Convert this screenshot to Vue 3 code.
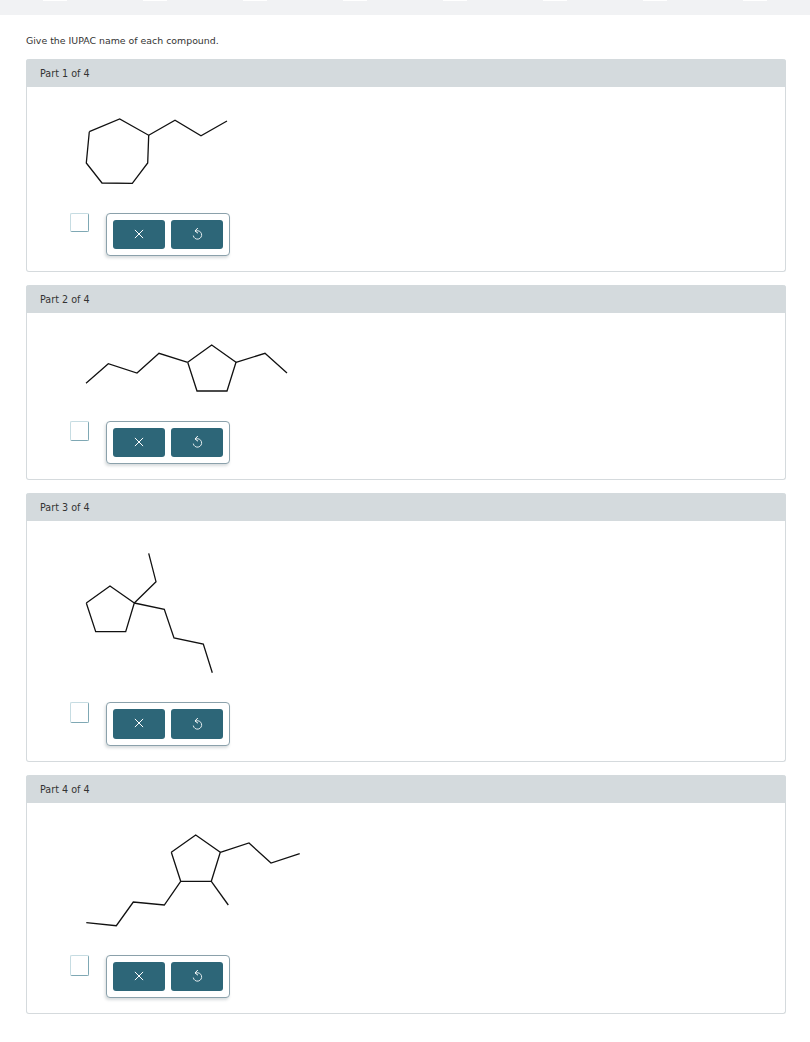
<script setup>
const parts = [
  {
    n: 1, top: 87, h: 126,
    lines: [
      '89.3,131.7 119.7,119 148.7,135.3 147.7,163 132.3,183.3 102,183 86.3,163 89.3,131.7',
      '148.7,135.3 175,120.3 201,135.7 227,121',
    ],
  },
  {
    n: 2, top: 313, h: 108,
    lines: [
      '187.7,362.3 211.7,345 236,362.3 227,391 197,391 187.7,362.3',
      '86,383.3 108.3,363.7 137,373 159,353.3 187.7,362.3',
      '236,362.3 265,353.3 287,373',
    ],
  },
  {
    n: 3, top: 521, h: 181,
    lines: [
      '86.3,603 110,586 134.3,603 125.7,631.7 95.7,631.7 86.3,603',
      '134.3,603 156,581.7 148.7,553.3',
      '134.3,603 164.3,609.3 174,638 203.3,644 212.3,672.7',
    ],
  },
  {
    n: 4, top: 803, h: 152,
    lines: [
      '171.3,852.3 195.7,835 220.3,852.3 211.3,881.3 180.7,881.3 171.3,852.3',
      '220.3,852.3 249,843 271,863 299.7,853.7',
      '211.3,881.3 228.3,905',
      '180.7,881.3 164.3,905 133.3,902 116.3,925.7 86.3,922.7',
    ],
  },
]
const tabs = 8
</script>

<template>
  <div class="page">
    <div class="topbar">
      <span v-for="t in tabs" :key="t" class="tab"></span>
    </div>
    <p class="prompt">Give the IUPAC name of each compound.</p>
    <section v-for="p in parts" :key="p.n" class="card" :class="`part-${p.n}`">
      <header class="card-head">Part {{ p.n }} of 4</header>
      <svg
        class="molecule"
        width="300"
        :height="p.h"
        :viewBox="`27 ${p.top} 300 ${p.h}`"
      >
        <polyline
          v-for="(l, i) in p.lines"
          :key="i"
          :points="l"
          fill="none"
          stroke="#111"
          stroke-width="1.3"
          stroke-linejoin="miter"
        />
      </svg>
      <div class="answer">
        <span class="check"></span>
        <div class="tools">
          <button class="btn" type="button" aria-label="Clear">
            <svg class="glyph" width="10" height="10" viewBox="0 0 10 10">
              <path d="M0.9 0.9 L9.1 9.1 M9.1 0.9 L0.9 9.1" stroke="#fff" stroke-width="1" fill="none" />
            </svg>
          </button>
          <button class="btn" type="button" aria-label="Undo">
            <svg class="glyph" width="11" height="13" viewBox="0 0 11 13">
              <path d="M4 4 A4.2 4.2 0 1 1 1.3 8.6" stroke="#e6eef0" stroke-width="1" fill="none" />
              <path d="M5.8 1 L3 4 L6 6.2" stroke="#fff" stroke-width="1" fill="none" />
            </svg>
          </button>
        </div>
      </div>
    </section>
  </div>
</template>

<style scoped>
.page {
  width: 810px;
  height: 1042px;
  overflow: hidden;
  background: #fff;
  font-family: "DejaVu Sans", Verdana, sans-serif;
  color: #333;
}
.topbar {
  height: 15px;
  background: #f1f2f4;
  display: flex;
  padding-left: 43px;
  gap: 76px;
}
.tab {
  width: 24px;
  height: 1px;
  background: #fff;
}
.prompt {
  margin: 0 0 12px 26px;
  padding-top: 20px;
  font-size: 9.4px;
  line-height: 12px;
}
.card {
  width: 760px;
  box-sizing: border-box;
  margin: 0 0 13px 26px;
  border: 1px solid #d5dadd;
  border-top: 0;
  border-radius: 3px;
  padding-bottom: 15px;
}
.card-head {
  height: 28px;
  margin: 0 -1px;
  padding-left: 14px;
  background: #d4dadd;
  border-radius: 3px 3px 0 0;
  font-size: 9.6px;
  line-height: 29px;
}
.molecule {
  display: block;
}
.answer {
  display: flex;
  align-items: flex-start;
  margin-left: 43px;
  gap: 17px;
}
.check {
  width: 19px;
  height: 20px;
  box-sizing: border-box;
  border: 1px solid;
  border-color: #c6dce2 #7fa8b4 #7fa8b4 #c6dce2;
  border-radius: 2px;
}
.part-1 .check {
  height: 19px;
}
.part-3 .check,
.part-4 .check {
  height: 21px;
}
.tools {
  display: flex;
  gap: 6px;
  padding: 6px;
  border: 1px solid #8ba1ab;
  border-radius: 4px;
  background: #fff;
  box-shadow: -1px 2px 3px rgba(60, 80, 90, 0.2);
}
.btn {
  width: 52px;
  height: 29px;
  padding: 0;
  border: 0;
  border-radius: 3px;
  background: #2d6678;
  display: flex;
  align-items: center;
  justify-content: center;
}
.part-3 .btn {
  height: 30px;
}
.glyph {
  margin-bottom: 2px;
}
</style>
